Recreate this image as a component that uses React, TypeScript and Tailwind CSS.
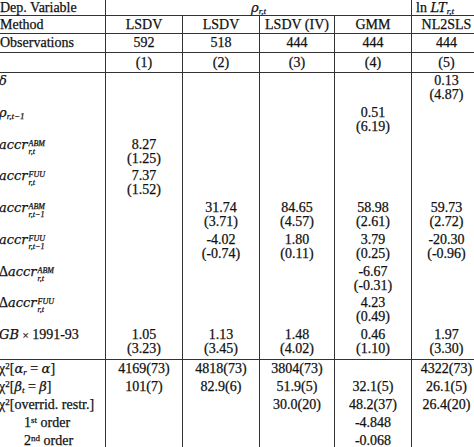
import React from "react";

const W = ["w-[77px]", "w-[77px]", "w-[75px]", "w-[77px]", "w-[69px]"];
const LINE = "border-[#333333]";

function M({ children }: { children: React.ReactNode }) {
  return <span className="font-['DejaVu_Serif',serif] italic text-[13px]">{children}</span>;
}

function Stack({ sup, sub }: { sup: string; sub: string }) {
  return (
    <span className="inline-flex flex-col align-[3px] text-[8px] leading-[8px] italic ml-[1px]">
      <span>{sup}</span>
      <span>{sub}</span>
    </span>
  );
}

function Sub({ children }: { children: React.ReactNode }) {
  return <sub className="text-[9px] italic">{children}</sub>;
}

type Cell = [string, string] | null;

const body: { label: React.ReactNode; vals: Cell[] }[] = [
  { label: <M>δ</M>, vals: [null, null, null, null, ["0.13", "(4.87)"]] },
  {
    label: (
      <>
        <M>ρ</M>
        <Sub>r,t−1</Sub>
      </>
    ),
    vals: [null, null, null, ["0.51", "(6.19)"], null],
  },
  {
    label: (
      <>
        <M>accr</M>
        <Stack sup="ABM" sub="r,t" />
      </>
    ),
    vals: [["8.27", "(1.25)"], null, null, null, null],
  },
  {
    label: (
      <>
        <M>accr</M>
        <Stack sup="FUU" sub="r,t" />
      </>
    ),
    vals: [["7.37", "(1.52)"], null, null, null, null],
  },
  {
    label: (
      <>
        <M>accr</M>
        <Stack sup="ABM" sub="r,t−1" />
      </>
    ),
    vals: [null, ["31.74", "(3.71)"], ["84.65", "(4.57)"], ["58.98", "(2.61)"], ["59.73", "(2.72)"]],
  },
  {
    label: (
      <>
        <M>accr</M>
        <Stack sup="FUU" sub="r,t−1" />
      </>
    ),
    vals: [null, ["-4.02", "(-0.74)"], ["1.80", "(0.11)"], ["3.79", "(0.25)"], ["-20.30", "(-0.96)"]],
  },
  {
    label: (
      <>
        Δ<M>accr</M>
        <Stack sup="ABM" sub="r,t" />
      </>
    ),
    vals: [null, null, null, ["-6.67", "(-0.31)"], null],
  },
  {
    label: (
      <>
        Δ<M>accr</M>
        <Stack sup="FUU" sub="r,t" />
      </>
    ),
    vals: [null, null, null, ["4.23", "(0.49)"], null],
  },
  {
    label: (
      <>
        <M>GB</M> <span className="text-[11px]">×</span> 1991-93
      </>
    ),
    vals: [["1.05", "(3.23)"], ["1.13", "(3.45)"], ["1.48", "(4.02)"], ["0.46", "(1.10)"], ["1.97", "(3.30)"]],
  },
];

const Chi = () => (
  <>
    χ<sup className="text-[9px]">2</sup>
  </>
);

const bottom: { label: React.ReactNode; vals: string[] }[] = [
  {
    label: (
      <>
        <Chi />[<M>α</M>
        <Sub>r</Sub> = <M>α</M>]
      </>
    ),
    vals: ["4169(73)", "4818(73)", "3804(73)", "", "4322(73)"],
  },
  {
    label: (
      <>
        <Chi />[<M>β</M>
        <Sub>t</Sub> = <M>β</M>]
      </>
    ),
    vals: ["101(7)", "82.9(6)", "51.9(5)", "32.1(5)", "26.1(5)"],
  },
  {
    label: (
      <>
        <Chi />[overrid. restr.]
      </>
    ),
    vals: ["", "", "30.0(20)", "48.2(37)", "26.4(20)"],
  },
  {
    label: (
      <span className="pl-[25px]">
        1<sup className="text-[9px]">st</sup> order
      </span>
    ),
    vals: ["", "", "", "-4.848", ""],
  },
  {
    label: (
      <span className="pl-[25px]">
        2<sup className="text-[9px]">nd</sup> order
      </span>
    ),
    vals: ["", "", "", "-0.068", ""],
  },
];

function HeadRow({ h, label, vals }: { h: string; label: string; vals: string[] }) {
  return (
    <div className={`flex ${h} border-b ${LINE}`}>
      <div className={`w-[108px] shrink-0 border-r ${LINE} pl-[2px] flex items-center`}>{label}</div>
      {vals.map((v, i) => (
        <div
          key={i}
          className={`${W[i]} shrink-0 ${i < 4 ? `border-r ${LINE}` : ""} flex items-center justify-center whitespace-nowrap`}
        >
          {v}
        </div>
      ))}
    </div>
  );
}

export default function App() {
  return (
    <div className="w-[474px] h-[447px] overflow-hidden bg-white">
      <div
        className="ml-[-2px] w-[483px] text-[14px] leading-[14px] text-[#111111] [-webkit-text-stroke:0.25px_#111111]"
        style={{ fontFamily: '"Liberation Serif", "Times New Roman", serif' }}
      >
        {/* Dep variable row */}
        <div className={`flex h-[16px] border-b ${LINE}`}>
          <div className={`w-[108px] shrink-0 border-r ${LINE} pl-[2px] flex items-center`}>Dep. Variable</div>
          <div className={`w-[306px] shrink-0 border-r ${LINE} flex items-center justify-center`}>
            <span>
              <M>ρ</M>
              <Sub>r,t</Sub>
            </span>
          </div>
          <div className="w-[69px] shrink-0 flex items-center pl-[4px] whitespace-nowrap">
            <span>
              ln <M>LT</M>
              <Sub>r,t</Sub>
            </span>
          </div>
        </div>
        <HeadRow h="h-[18px]" label="Method" vals={["LSDV", "LSDV", "LSDV (IV)", "GMM", "NL2SLS"]} />
        <HeadRow h="h-[19px]" label="Observations" vals={["592", "518", "444", "444", "444"]} />
        <HeadRow h="h-[20px]" label="" vals={["(1)", "(2)", "(3)", "(4)", "(5)"]} />

        {/* Body */}
        <div className={`flex flex-col h-[287px] border-b ${LINE}`}>
          {body.map((r, ri) => (
            <div key={ri} className="flex flex-1">
              <div className={`w-[108px] shrink-0 border-r ${LINE} pl-[1px] pt-[1px] whitespace-nowrap`}>
                {r.label}
              </div>
              {r.vals.map((v, i) => (
                <div
                  key={i}
                  className={`${W[i]} shrink-0 ${i < 4 ? `border-r ${LINE}` : ""} pt-[1px] flex flex-col items-center`}
                >
                  {v && (
                    <>
                      <span>{v[0]}</span>
                      <span>{v[1]}</span>
                    </>
                  )}
                </div>
              ))}
            </div>
          ))}
        </div>

        {/* Bottom stats */}
        <div className="flex flex-col">
          {bottom.map((r, ri) => (
            <div key={ri} className="flex h-[18px] leading-[18px]">
              <div className={`w-[108px] shrink-0 border-r ${LINE} pl-[1px] whitespace-nowrap`}>{r.label}</div>
              {r.vals.map((v, i) => (
                <div
                  key={i}
                  className={`${W[i]} shrink-0 ${i < 4 ? `border-r ${LINE}` : ""} text-center whitespace-nowrap`}
                >
                  {v}
                </div>
              ))}
            </div>
          ))}
        </div>
      </div>
    </div>
  );
}
